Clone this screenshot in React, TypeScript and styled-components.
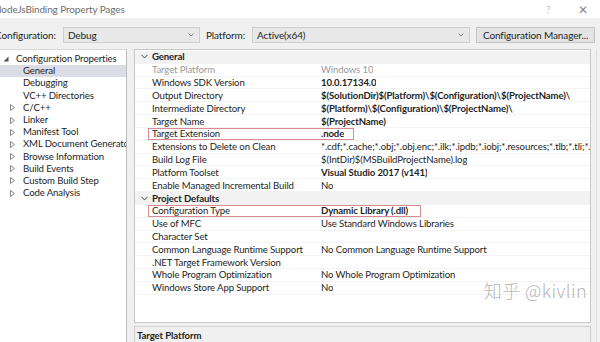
import React from 'react';
import styled, { createGlobalStyle } from 'styled-components';

const GlobalStyle = createGlobalStyle`
  html, body {
    margin: 0;
    padding: 0;
    background: #f0f0f0;
  }
  body {
    font-family: Lato, 'Noto Sans', sans-serif;
    font-size: 9.6px;
    letter-spacing: -0.12px;
    color: #1e1e1e;
  }
`;

const Window = styled.div`
  position: relative;
  width: 600px;
  height: 342px;
  overflow: hidden;
  display: flex;
  flex-direction: column;
  background: #f0f0f0;
`;

const TitleBar = styled.div`
  height: 18px;
  background: #fff;
  display: flex;
  align-items: center;
  padding-right: 12px;
`;

const Title = styled.div`
  flex: 1;
  margin-left: -6px;
  color: #6d6d6d;
  font-size: 10px;
  white-space: nowrap;
`;

const TitleButton = styled.span<{ gap?: number }>`
  color: #8a8a8a;
  font-size: ${({ gap }) => (gap ? '12px' : '9.5px')};
  margin-left: ${({ gap }) => gap || 0}px;
  font-weight: 300;
`;

const ConfigBar = styled.div`
  height: 31px;
  display: flex;
  align-items: center;
  padding-top: 3px;
  box-sizing: border-box;
  font-size: 10px;
`;

const Label = styled.span<{ shift?: number }>`
  margin-left: ${({ shift }) => shift || 0}px;
  white-space: nowrap;
  color: #1e1e1e;
`;

const Combo = styled.div<{ width: number }>`
  width: ${({ width }) => width}px;
  height: 16px;
  box-sizing: border-box;
  margin-left: 7px;
  margin-right: 6px;
  border: 1px solid #cfcfcf;
  background: #e8e8e8;
  display: flex;
  align-items: center;
  justify-content: space-between;
  padding: 0 5px 0 4px;
  flex-shrink: 0;
`;

const Chevron = styled.svg`
  width: 6px;
  height: 4px;
`;

const ManagerButton = styled.div`
  height: 16px;
  width: 119px;
  flex-shrink: 0;
  box-sizing: border-box;
  border: 1px solid #c4c4c4;
  background: #e3e3e3;
  display: flex;
  align-items: center;
  justify-content: center;
  white-space: nowrap;
`;

const Body = styled.div`
  flex: 1;
  display: flex;
  min-height: 0;
  padding-right: 5px;
  border-right: 1px solid #dcdcdc;
  margin-right: 3px;
`;

const Tree = styled.div`
  width: 127px;
  flex-shrink: 0;
  background: #fff;
  border-top: 1px solid #d8d8d8;
  border-right: 1px solid #bdbdbd;
  padding-top: 3px;
  box-sizing: border-box;
`;

const TreeItem = styled.div<{ depth: number; selected?: boolean }>`
  height: 12.2px;
  line-height: 12.2px;
  display: flex;
  align-items: center;
  white-space: nowrap;
  overflow: hidden;
  padding-left: ${({ depth }) => (depth === 0 ? 3 : 10)}px;
  background: ${({ selected }) => (selected ? '#dcdce6' : 'transparent')};
`;

const Toggle = styled.span`
  width: 13px;
  flex-shrink: 0;
  display: inline-flex;
  align-items: center;
`;

const Main = styled.div`
  flex: 1;
  margin-left: 7px;
  display: flex;
  flex-direction: column;
  min-width: 0;
`;

const Grid = styled.div`
  position: relative;
  flex: 1;
  background: #fff;
  border: 1px solid #c8c8c8;
  padding-top: 1px;
  overflow: hidden;
`;

const Row = styled.div<{ category?: boolean; mark?: number }>`
  position: relative;
  height: 12.83px;
  display: flex;
  align-items: center;
  white-space: nowrap;
  border-bottom: 1px solid #f3f3f3;
  box-sizing: border-box;
  background: ${({ category }) => (category ? '#f2f2f2' : '#fff')};
  font-weight: ${({ category }) => (category ? 700 : 400)};

  &::after {
    content: '';
    display: ${({ mark }) => (mark ? 'block' : 'none')};
    position: absolute;
    left: 13px;
    top: 0;
    width: ${({ mark }) => mark || 0}px;
    height: 12.5px;
    box-sizing: border-box;
    border: 1px solid #d98a90;
    pointer-events: none;
  }
`;

const Margin = styled.span`
  width: 17px;
  flex-shrink: 0;
  display: inline-flex;
  justify-content: center;
  padding-left: 2px;
  box-sizing: border-box;
`;

const Name = styled.span<{ dim?: boolean }>`
  width: 169px;
  flex-shrink: 0;
  color: ${({ dim }) => (dim ? '#9a9a9a' : '#1e1e1e')};
`;

const Value = styled.span<{ bold?: boolean; dim?: boolean }>`
  font-weight: ${({ bold }) => (bold ? 700 : 400)};
  color: ${({ dim }) => (dim ? '#9a9a9a' : '#1e1e1e')};
  overflow: hidden;
`;

const Watermark = styled.div`
  position: absolute;
  right: 3px;
  bottom: 19px;
  font-family: 'Noto Sans CJK SC', 'Noto Sans', sans-serif;
  font-size: 18px;
  font-weight: 300;
  color: #b8b8b8;
  letter-spacing: 0.4px;
`;

const Splitter = styled.div`
  height: 3px;
`;

const Description = styled.div`
  height: 12px;
  background: #f0f0f0;
  border: 1px solid #cfcfcf;
  border-bottom: none;
  padding: 3px 0 0 2px;
  font-weight: 700;
`;

type Prop = { name: string; value?: string; bold?: boolean; dim?: boolean; mark?: number };

const general: Prop[] = [
  { name: 'Target Platform', value: 'Windows 10', dim: true },
  { name: 'Windows SDK Version', value: '10.0.17134.0', bold: true },
  { name: 'Output Directory', value: '$(SolutionDir)$(Platform)\\$(Configuration)\\$(ProjectName)\\', bold: true },
  { name: 'Intermediate Directory', value: '$(Platform)\\$(Configuration)\\$(ProjectName)\\', bold: true },
  { name: 'Target Name', value: '$(ProjectName)', bold: true },
  { name: 'Target Extension', value: '.node', bold: true, mark: 206 },
  { name: 'Extensions to Delete on Clean', value: '*.cdf;*.cache;*.obj;*.obj.enc;*.ilk;*.ipdb;*.iobj;*.resources;*.tlb;*.tli;*.tlh;*.tmp' },
  { name: 'Build Log File', value: '$(IntDir)$(MSBuildProjectName).log' },
  { name: 'Platform Toolset', value: 'Visual Studio 2017 (v141)', bold: true },
  { name: 'Enable Managed Incremental Build', value: 'No' },
];

const defaults: Prop[] = [
  { name: 'Configuration Type', value: 'Dynamic Library (.dll)', bold: true, mark: 273 },
  { name: 'Use of MFC', value: 'Use Standard Windows Libraries' },
  { name: 'Character Set' },
  { name: 'Common Language Runtime Support', value: 'No Common Language Runtime Support' },
  { name: '.NET Target Framework Version' },
  { name: 'Whole Program Optimization', value: 'No Whole Program Optimization' },
  { name: 'Windows Store App Support', value: 'No' },
];

const treeItems: { label: string; depth: number; toggle?: 'open' | 'closed'; selected?: boolean }[] = [
  { label: 'Configuration Properties', depth: 0, toggle: 'open' },
  { label: 'General', depth: 1, selected: true },
  { label: 'Debugging', depth: 1 },
  { label: 'VC++ Directories', depth: 1 },
  { label: 'C/C++', depth: 1, toggle: 'closed' },
  { label: 'Linker', depth: 1, toggle: 'closed' },
  { label: 'Manifest Tool', depth: 1, toggle: 'closed' },
  { label: 'XML Document Generator', depth: 1, toggle: 'closed' },
  { label: 'Browse Information', depth: 1, toggle: 'closed' },
  { label: 'Build Events', depth: 1, toggle: 'closed' },
  { label: 'Custom Build Step', depth: 1, toggle: 'closed' },
  { label: 'Code Analysis', depth: 1, toggle: 'closed' },
];

const Down = () => (
  <Chevron viewBox="0 0 6 4">
    <path d="M0.5 0.5 L3 3 L5.5 0.5" fill="none" stroke="#777" strokeWidth="0.9" />
  </Chevron>
);

const CategoryChevron = () => (
  <svg width="7" height="5" viewBox="0 0 7 5">
    <path d="M0.5 0.8 L3.5 4 L6.5 0.8" fill="none" stroke="#444" strokeWidth="1" />
  </svg>
);

const TreeToggle: React.FC<{ kind?: 'open' | 'closed' }> = ({ kind }) => {
  if (!kind) return <Toggle />;
  return (
    <Toggle>
      {kind === 'open' ? (
        <svg width="6" height="6" viewBox="0 0 6 6">
          <path d="M5.5 0.5 L5.5 5.5 L0.5 5.5 Z" fill="#555" />
        </svg>
      ) : (
        <svg width="5" height="7" viewBox="0 0 5 7">
          <path d="M0.5 0.5 L4.5 3.5 L0.5 6.5 Z" fill="none" stroke="#777" strokeWidth="0.9" />
        </svg>
      )}
    </Toggle>
  );
};

const PropRow: React.FC<{ p: Prop }> = ({ p }) => (
  <Row mark={p.mark}>
    <Margin />
    <Name dim={p.dim}>{p.name}</Name>
    <Value bold={p.bold} dim={p.dim}>{p.value}</Value>
  </Row>
);

const App: React.FC = () => {
  return (
    <Window>
      <GlobalStyle />
      <TitleBar>
        <Title>NodeJsBinding Property Pages</Title>
        <TitleButton>?</TitleButton>
        <TitleButton gap={28}>✕</TitleButton>
      </TitleBar>
      <ConfigBar>
        <Label shift={-5}>Configuration:</Label>
        <Combo width={137}>
          <span>Debug</span>
          <Down />
        </Combo>
        <Label>Platform:</Label>
        <Combo width={218}>
          <span>Active(x64)</span>
          <Down />
        </Combo>
        <ManagerButton>Configuration Manager...</ManagerButton>
      </ConfigBar>
      <Body>
        <Tree>
          {treeItems.map((t) => (
            <TreeItem key={t.label} depth={t.depth} selected={t.selected}>
              <TreeToggle kind={t.toggle} />
              {t.label}
            </TreeItem>
          ))}
        </Tree>
        <Main>
          <Grid>
            <Row category>
              <Margin>
                <CategoryChevron />
              </Margin>
              General
            </Row>
            {general.map((p) => (
              <PropRow key={p.name} p={p} />
            ))}
            <Row category>
              <Margin>
                <CategoryChevron />
              </Margin>
              Project Defaults
            </Row>
            {defaults.map((p) => (
              <PropRow key={p.name} p={p} />
            ))}
            <Watermark>知乎 @kivlin</Watermark>
          </Grid>
          <Splitter />
          <Description>Target Platform</Description>
        </Main>
      </Body>
    </Window>
  );
};

export default App;
